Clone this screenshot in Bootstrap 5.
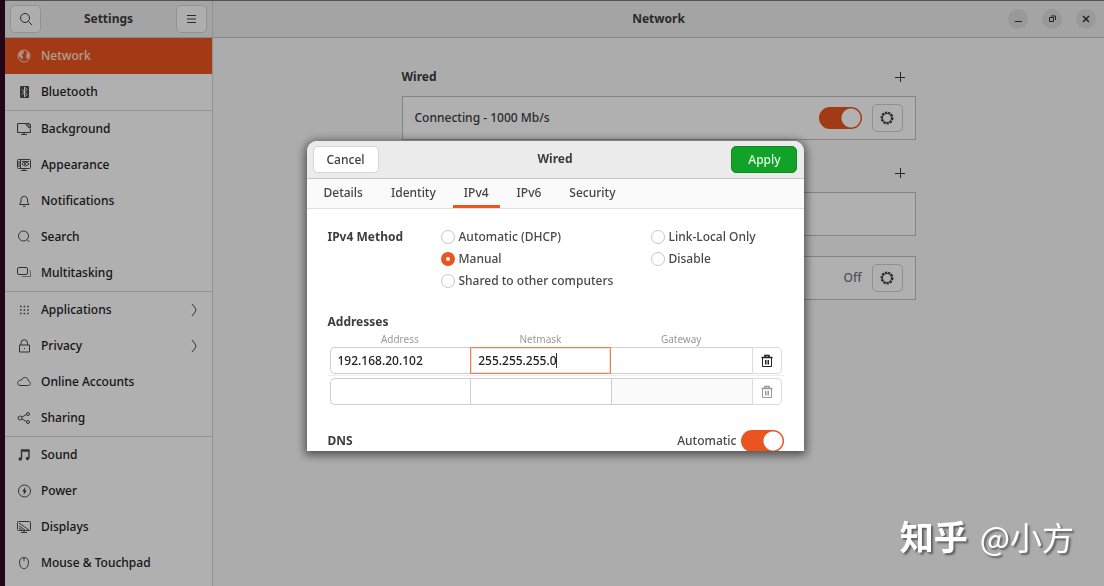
<!DOCTYPE html>
<html lang="en">
<head>
<meta charset="utf-8">
<meta name="viewport" content="width=device-width, initial-scale=1">
<title>Settings</title>
<link href="https://cdn.jsdelivr.net/npm/bootstrap@5.3.0/dist/css/bootstrap.min.css" rel="stylesheet">
<style>
:root{--accent:#e95420;--ink:#3d3d3d}
body{font-family:"Noto Sans","Open Sans",sans-serif;font-size:13px;line-height:20px;color:var(--ink);background:#300a24}
svg{display:block;fill:none;stroke:currentColor}
.window{margin-left:5px;height:100vh;border-top:1px solid #777;background:#f6f6f6}
.side{width:208px;background:#fcfcfc;border-right:1px solid #d0d0d0}
.bar{height:37px;background:#ebebeb;border-bottom:1px solid #c4c4c4}
.side .bar{padding:0 5px}
.title{font-size:12px;font-weight:700;margin:0}
.tool{width:31px;height:28px;padding:0;border:1px solid #d2d2d2;border-radius:5px;background:#fafafa;color:var(--ink)}
.cog{height:28px;margin-left:10px;border-color:#cdcdcd;background:transparent}
.entry{height:36px;padding:0 15px 0 12px;gap:10px;font-size:12px;font-weight:500;color:#222;text-decoration:none}
.entry.active{background:var(--accent);color:#ffe0d4}
.entry svg{color:#4a4a4a}
.entry.active svg{color:#ffd0bf}
.entry.split{height:37px;border-bottom:1px solid #d6d6d6}
.controls{gap:14px}
.wctl{width:20px;height:20px;padding:0;border:0;border-radius:50%;background:#dcdcdc;color:#333}
.pane{max-width:514px;padding-top:29px}
.sec{margin-bottom:9px;padding-right:6px}
.sec-next{margin-top:23px}
.panel-next{margin-top:20px}
.plus{width:20px;height:20px;padding:0;border:0;background:none;color:#333}
.panel{height:44px;padding:0 12px;border:1px solid #bdbdbd;background:#fcfcfc;font-size:12px;font-weight:500}
.toggle{appearance:none;width:43px;height:22px;margin:0;border-radius:11px;background:radial-gradient(circle at calc(100% - 11px) 50%,#fff 9px,transparent 10px) var(--accent)}
.veil{inset:0 0 0 5px;padding:6px 0 0 1px;background:rgba(0,0,0,.3)}
.edge{inset:0 auto 0 0;width:5px;background:rgba(0,0,0,.3)}
.dialog{width:497px;border-radius:10px 10px 0 0;background:#fff;box-shadow:0 2px 10px 2px rgba(0,0,0,.55)}
.dlg-head{height:38px;padding:0 6px;background:#ebebeb;border-bottom:1px solid #c6c6c6;border-radius:10px 10px 0 0}
.act{width:66px;height:27px;padding:0;border:1px solid #d5d5d5;border-radius:5px;background:#fff;color:var(--ink);font-size:12px;font-weight:500}
.act.go{background:#12a129;border-color:#0c8a20;color:#e4ffe8}
.tabs{height:30px;padding-left:6px;gap:6px;background:#fafafa;border-bottom:1px solid #dedede}
.tabs a{padding:0 11px;line-height:28px;font-size:12px;font-weight:500;color:#444;text-decoration:none;border-bottom:3px solid transparent;height:29px}
.tabs a.active{border-color:var(--accent)}
.sheet{max-height:242px;padding:18px 20px 0 21px}
.method{display:grid;grid-template-columns:113px 210px 1fr;row-gap:2px;font-size:12px;font-weight:500}
.method label,.sheet .aside{color:#484848;font-size:12px;font-weight:500}
.pick{appearance:none;width:14px;height:14px;margin:0;border:1px solid #c6c6cc;border-radius:50%;background:#fff}
.pick:checked{border:5px solid var(--accent)}
.quad{display:grid;grid-template-columns:1fr 1fr 1fr 30px;margin:0 2px}
.heads{padding-top:2px;font-size:10px;line-height:16px;color:#999;text-align:center}
.cell{display:block;min-width:0;width:100%;height:27px;padding:0 7px;border:1px solid #cfcfcf;border-right-width:0;background:#fff;color:#222;font-size:12px;font-weight:500;outline:0}
.first{border-radius:5px 0 0 5px}
.cell.editing{border:1px solid #ec7f5a;box-shadow:inset 0 0 0 1px #fbe0d6}
.dim{background:#fafafa}
.del{height:27px;padding:0;border:1px solid #dadada;border-radius:0 5px 5px 0;background:#fff;color:#222}
.del:disabled{color:#999}
.caret{left:86px;top:6px;width:1px;height:15px;background:#333}
.rule{height:1px;margin:1px 0 2px;background:#f0eeec}
.dns{margin-top:25px}
.sign{right:30px;bottom:28px;gap:12px;color:#fff;font-family:"Noto Sans CJK SC",sans-serif;font-size:32px;line-height:44px;text-shadow:2px 2px 2px rgba(0,0,0,.45)}
.sign b{font-size:34px}
</style>
</head>
<body class="overflow-hidden">
<div class="window d-flex">
  <nav class="side flex-shrink-0">
    <div class="bar d-flex align-items-center justify-content-between">
      <button class="tool d-flex align-items-center justify-content-center" aria-label="Search settings"><svg width="14" height="14"><circle cx="6" cy="6" r="4.5"/><path d="M9.5 9.5 13 13"/></svg></button>
      <h1 class="title">Settings</h1>
      <button class="tool d-flex align-items-center justify-content-center" aria-label="Menu"><svg width="12" height="12"><path d="M2 2.500h9M2 6h9M2 9.500h9"/></svg></button>
    </div>
    <a href="#" class="entry active d-flex align-items-center"><svg width="14" height="14"><circle cx="7" cy="7" r="6"/><path d="M1.500 4.500 4 1.800 7 2.500 6.500 4.500 4.500 5.500 6 7.500 5 11 3.500 8.500 1.500 7zM9 2.500l2.500 1 1 3.500-1.500 3.500L9.500 9l-.5-2.500 1-1.500z" fill="currentColor" stroke="none"/></svg>Network</a>
    <a href="#" class="entry split d-flex align-items-center"><svg width="14" height="14"><rect x="3" y="1" width="9" height="12" rx="1" fill="currentColor" stroke="none"/><path d="m5 4.500 5 5-2.500 2.500V2L10 4.500l-5 5" stroke="#fff"/></svg>Bluetooth</a>
    <a href="#" class="entry d-flex align-items-center"><svg width="14" height="14"><path d="M8 1.500H1.500a1 1 0 0 0-1 1v7a1 1 0 0 0 1 1h11a1 1 0 0 0 1-1V7M7 10.500v2M4 12.500h6" stroke-width="1.200"/><path d="M8.500 1.500h4l1 1V6h-1.500L8.500 2z" fill="currentColor" fill-opacity=".5"/></svg>Background</a>
    <a href="#" class="entry d-flex align-items-center"><svg width="14" height="14"><rect x=".5" y="1.500" width="13" height="9" rx="1"/><path d="M3.500 2v8M1 4h2M1 6h2M1 8h2M7 10.500v2M4 12.500h6M5 6q3-4 7 0q-4 4-7 0zM5 3.500h7"/><circle cx="8" cy="6" r=".7"/></svg>Appearance</a>
    <a href="#" class="entry d-flex align-items-center"><svg width="14" height="14"><path d="M2.500 10.500h9.500L10.500 8V5a3.300 3.300 0 0 0-6.500 0v3zM6 12.200h2.500"/></svg>Notifications</a>
    <a href="#" class="entry d-flex align-items-center"><svg width="14" height="14"><circle cx="6.500" cy="6" r="5"/><path d="m10 9.500 2.500 2.500"/></svg>Search</a>
    <a href="#" class="entry split d-flex align-items-center"><svg width="14" height="14"><rect x=".5" y="1.500" width="10" height="7" rx="1.500"/><path d="M12 4.500h.5a1 1 0 0 1 1 1v5h-9" stroke-opacity=".6"/></svg>Multitasking</a>
    <a href="#" class="entry d-flex align-items-center"><svg width="14" height="14"><path d="M3 3.500h9M3 7h9M3 10.500h9" stroke-width="1.600" stroke-dasharray="1.600 2"/></svg>Applications<svg class="ms-auto" width="6" height="14"><path d="M1 1q3 3 4 6-1 3-4 6"/></svg></a>
    <a href="#" class="entry d-flex align-items-center"><svg width="14" height="14"><path d="M2.500 6h10v7h-10zM4 6V4a3.200 3.200 0 0 1 6.500 0v2M7 9.500h1"/></svg>Privacy<svg class="ms-auto" width="6" height="14"><path d="M1 1q3 3 4 6-1 3-4 6"/></svg></a>
    <a href="#" class="entry d-flex align-items-center"><svg width="14" height="14"><path d="M3 10.500h8.500c2.500-.5 2.500-3.500 0-4.500-.5-4-5.500-5-7-1C0 5-.5 10 3 10.500z"/></svg>Online Accounts</a>
    <a href="#" class="entry split d-flex align-items-center"><svg width="14" height="14"><circle cx="3" cy="7" r="2"/><circle cx="11" cy="3" r="1.500"/><circle cx="11" cy="11" r="1.500"/><path d="m5 6 4.500-2.500M5 8l4.500 2.500"/></svg>Sharing</a>
    <a href="#" class="entry d-flex align-items-center"><svg width="14" height="14"><path d="M4.500 11V2h7.500v8M4.500 3H12" stroke-width="1.400"/><circle cx="3.200" cy="11" r="1.700" fill="currentColor" stroke="none"/><circle cx="10.500" cy="10.500" r="1.700" fill="currentColor" stroke="none"/></svg>Sound</a>
    <a href="#" class="entry d-flex align-items-center"><svg width="14" height="14"><circle cx="7.500" cy="7" r="6"/><path d="M8.500 3 5 7.500h2L6.500 11 10 6.500H8z" fill="currentColor" stroke="none"/></svg>Power</a>
    <a href="#" class="entry d-flex align-items-center"><svg width="14" height="14"><rect x=".5" y="1.500" width="13" height="9" rx="1"/><path d="m2 3 10 7M2 6l6 4M2 8l3 2M7 10.500v2M4 12.500h6"/></svg>Displays</a>
    <a href="#" class="entry d-flex align-items-center"><svg width="14" height="14"><path d="M2.500 6c0-6 9-6 9 0 0 9-9 9-9 0zM7 1.500V5"/></svg>Mouse &amp; Touchpad</a>
  </nav>

  <main class="flex-grow-1">
    <header class="bar d-flex align-items-center position-relative">
      <h2 class="title w-100 text-center">Network</h2>
      <div class="controls position-absolute end-0 me-2 d-flex">
        <button class="wctl" aria-label="Minimize"><svg width="20" height="20"><path d="M7 12.500h7" /></svg></button>
        <button class="wctl" aria-label="Restore"><svg width="20" height="20"><path d="M7.500 8.500h4v4h-4zM9 7h4.500v4"/></svg></button>
        <button class="wctl" aria-label="Close"><svg width="20" height="20"><path d="m7 7 6 6m0-6-6 6" stroke-width="1.500"/></svg></button>
      </div>
    </header>
    <div class="pane mx-auto">
      <div class="sec d-flex align-items-center justify-content-between"><h3 class="title">Wired</h3><button class="plus" aria-label="Add wired profile"><svg width="20" height="20"><path d="M5 10.500h10M10.500 5v10"/></svg></button></div>
      <div class="panel d-flex align-items-center">
        <span class="me-auto">Connecting - 1000 Mb/s</span>
        <input type="checkbox" role="switch" class="toggle" checked aria-label="Wired connection">
        <button class="tool cog d-flex align-items-center justify-content-center" aria-label="Wired options"><svg width="16" height="16"><circle cx="8" cy="8" r="5.500" stroke-width="2" stroke-dasharray="2.300 1"/><circle cx="8" cy="8" r="4.500"/></svg></button>
      </div>
      <div class="sec sec-next d-flex justify-content-end"><button class="plus" aria-label="Add VPN"><svg width="20" height="20"><path d="M5 10.500h10M10.500 5v10"/></svg></button></div>
      <div class="panel"></div>
      <div class="panel panel-next d-flex align-items-center justify-content-end">
        <span class="text-secondary">Off</span>
        <button class="tool cog d-flex align-items-center justify-content-center" aria-label="Proxy options"><svg width="16" height="16"><circle cx="8" cy="8" r="5.500" stroke-width="2" stroke-dasharray="2.300 1"/><circle cx="8" cy="8" r="4.500"/></svg></button>
      </div>
    </div>
  </main>
</div>

<div class="edge position-fixed"></div>
<div class="veil position-fixed d-flex align-items-center justify-content-center">
  <section class="dialog" role="dialog" aria-labelledby="dlg-title">
    <header class="dlg-head d-flex align-items-center justify-content-between">
      <button class="act">Cancel</button>
      <h2 class="title" id="dlg-title">Wired</h2>
      <button class="act go">Apply</button>
    </header>
    <nav class="tabs d-flex">
      <a href="#">Details</a><a href="#">Identity</a><a href="#" class="active">IPv4</a><a href="#">IPv6</a><a href="#">Security</a>
    </nav>
    <div class="sheet overflow-hidden">
      <div class="method">
        <h3 class="title align-self-center">IPv4 Method</h3>
        <label class="d-flex align-items-center gap-1"><input type="radio" name="m" class="pick">Automatic (DHCP)</label>
        <label class="d-flex align-items-center gap-1"><input type="radio" name="m" class="pick">Link-Local Only</label>
        <span></span>
        <label class="d-flex align-items-center gap-1"><input type="radio" name="m" class="pick" checked>Manual</label>
        <label class="d-flex align-items-center gap-1"><input type="radio" name="m" class="pick">Disable</label>
        <span></span>
        <label class="d-flex align-items-center gap-1"><input type="radio" name="m" class="pick">Shared to other computers</label>
      </div>
      <h3 class="title mt-4">Addresses</h3>
      <div class="quad heads"><label for="a1">Address</label><label for="n1">Netmask</label><label for="g1">Gateway</label></div>
      <div class="quad">
        <input id="a1" class="cell first" value="192.168.20.102">
        <div class="position-relative"><input id="n1" class="cell editing" value="255.255.255.0"><span class="caret position-absolute"></span></div>
        <input id="g1" class="cell border-start-0">
        <button class="del d-flex align-items-center justify-content-center" aria-label="Delete address"><svg width="14" height="14"><path d="M1.500 3.500h11M5 3V1.500h4V3" stroke-width="1.600"/><path d="M2.500 4v8.500h9V4M5.500 6v4.500M7 6v4.500M8.500 6v4.500"/></svg></button>
      </div>
      <div class="rule"></div>
      <div class="quad">
        <input class="cell first" aria-label="Address 2">
        <input class="cell" aria-label="Netmask 2">
        <input class="cell dim" aria-label="Gateway 2">
        <button class="del d-flex align-items-center justify-content-center" disabled aria-label="Delete address 2"><svg width="14" height="14"><path d="M1.500 3.500h11M5 3V1.500h4V3" stroke-width="1.600"/><path d="M2.500 4v8.500h9V4M5.500 6v4.500M7 6v4.500M8.500 6v4.500"/></svg></button>
      </div>
      <div class="dns d-flex align-items-center">
        <h3 class="title me-auto">DNS</h3>
        <label for="dns" class="aside me-1">Automatic</label>
        <input id="dns" type="checkbox" role="switch" class="toggle" checked>
      </div>
    </div>
  </section>
</div>
<div class="sign position-fixed d-flex align-items-center"><b>知乎</b><span>@小方</span></div>
</body>
</html>
